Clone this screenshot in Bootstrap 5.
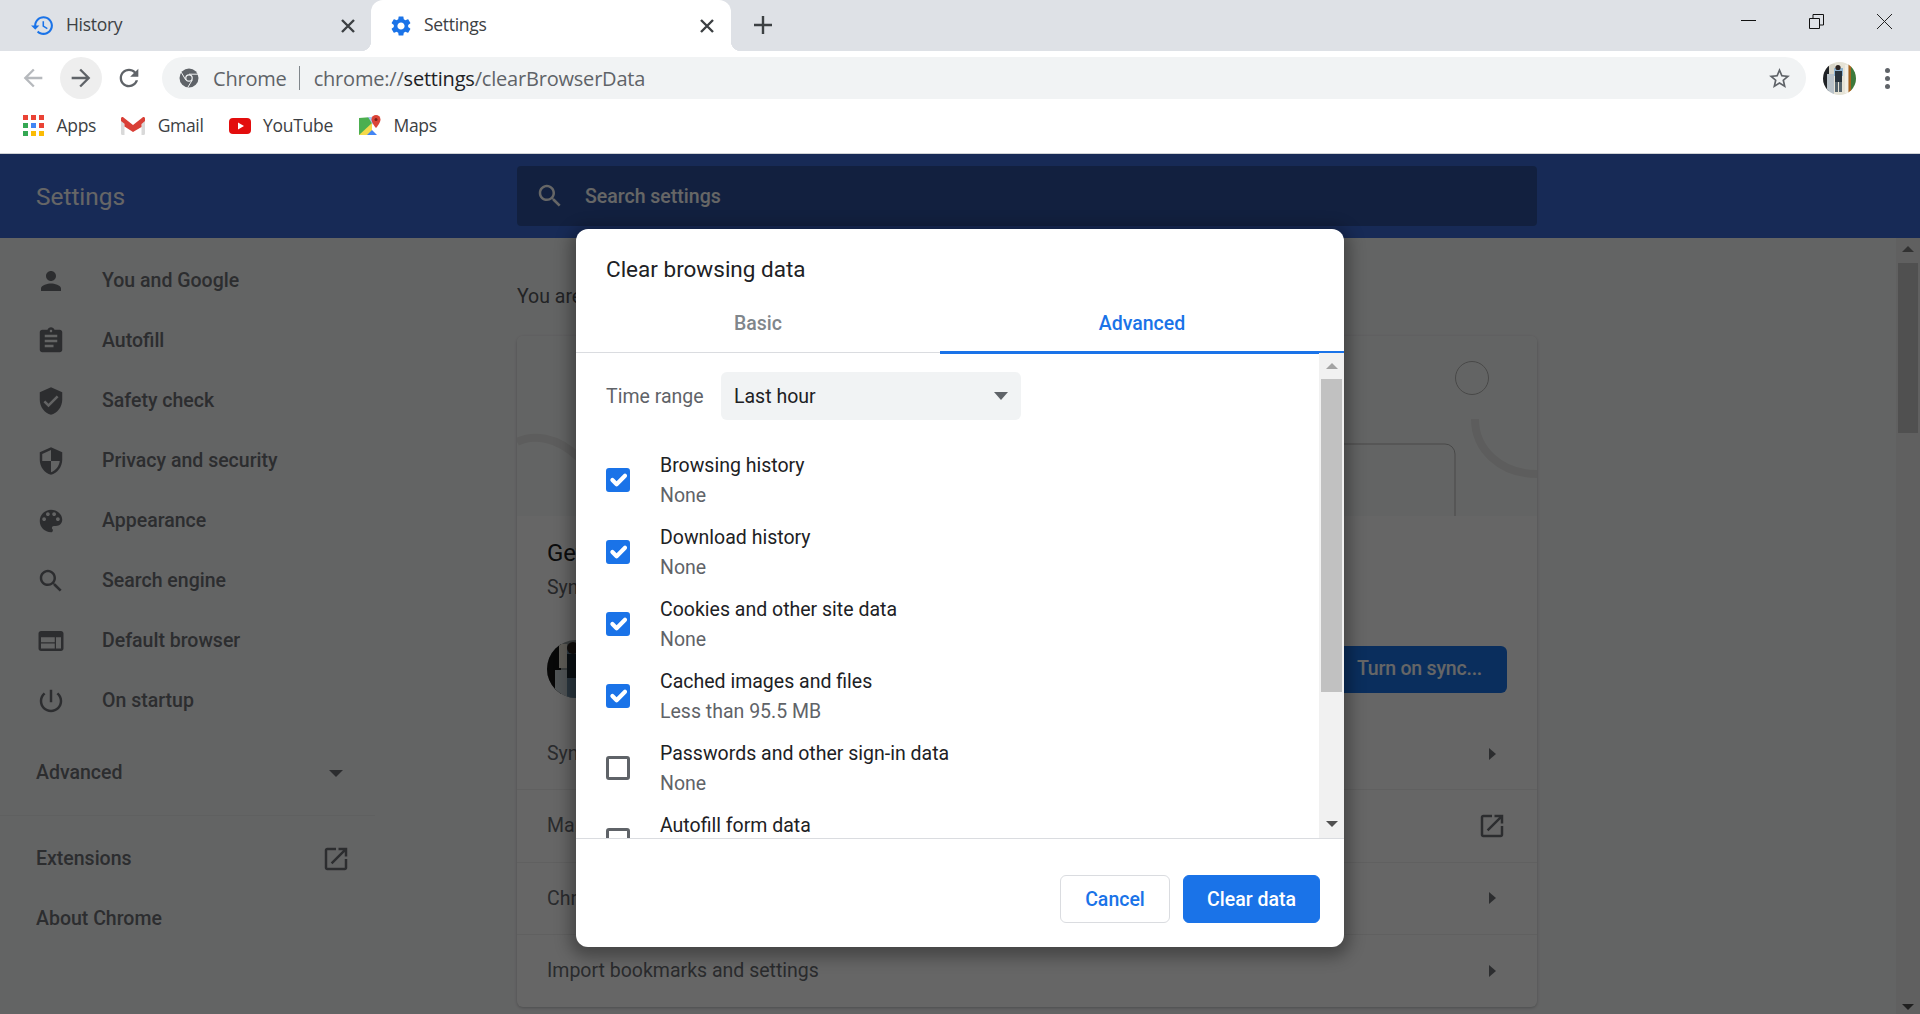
<!DOCTYPE html>
<html lang="en">
<head>
<meta charset="UTF-8">
<title>Settings</title>
<link href="https://cdn.jsdelivr.net/npm/bootstrap@5.3.0/dist/css/bootstrap.min.css" rel="stylesheet">
<style>
html, body { height: 100%; overflow: hidden; }
body { font-family: Roboto, sans-serif; background: #fff; color: #202124; }
svg { display: block; flex: none; fill: currentColor; }

/* browser chrome */
.chrome-ui { font-family: "Open Sans", "Noto Sans", sans-serif; }
.tab-strip { height: 51px; background: #dee1e6; color: #3c4043; }
.tab-item { width: 360px; height: 51px; font-size: 17.5px; padding: 0 17px 0 32px; letter-spacing: -.3px; }
.tab-item span { margin-top: -2px; }
.tab-first { width: 371px; padding-left: 30px; padding-right: 16px; }
.tab-active { background: #fff; border-radius: 12px 12px 0 0; position: relative; padding-left: 18px; padding-right: 17px; }
.tab-active::before, .tab-active::after { content: ""; position: absolute; bottom: 0; width: 10px; height: 10px; }
.tab-active::before { left: -10px; background: radial-gradient(circle at 0 0, transparent 10px, #fff 10.5px); }
.tab-active::after { right: -10px; background: radial-gradient(circle at 100% 0, transparent 10px, #fff 10.5px); }
.tab-title { margin-left: 11px; }
.new-tab { margin-left: 23px; margin-top: -1px; }
.win-btns { margin-left: auto; margin-right: 28px; gap: 53px; margin-top: -8px; color: #111; }
.tool-row { height: 54px; padding: 6px 0; color: #5f6368; }
.tool-back { margin-left: 19px; color: #b6b9bd; }
.tool-fwd { width: 42px; height: 42px; border-radius: 50%; background: #eeeeee; margin-left: 13px; }
.tool-reload { margin-left: 13px; }
.addr-bar { width: 1644px; height: 42px; margin-left: 19px; background: #f1f3f4; border-radius: 21px; padding: 0 14px 0 17px; font-size: 20px; letter-spacing: -.2px; }
.addr-text { padding-top: 1px; }
.addr-sep { width: 1px; height: 24px; background: #80868b; margin: 0 14px 0 12px; }
.addr-host { color: #202124; }
.addr-gray { color: #5f6368; }
.addr-origin { margin-left: 14px; padding-top: 1px; color: #5f6368; }
.avatar-pic { margin-left: 17px; }
.menu-dots { margin-left: 29px; gap: 3px; }
.menu-dots i { display: block; width: 5px; height: 5px; border-radius: 50%; background: #5f6368; }
.mark-row { height: 49px; padding: 0 0 7px 23px; border-bottom: 1px solid #d0d2d5; font-size: 17.5px; color: #3c4043; letter-spacing: -.3px; }
.mark-item { margin-right: 25px; gap: 12.5px; }
.apps-grid { display: grid; grid-template-columns: repeat(3, 5px); gap: 3px; width: 21px; }
.apps-grid i { display: block; width: 5px; height: 5px; }

/* settings page, dimmed by the scrim */
.settings-page { position: relative; height: 860px; background: #f8f9fa; overflow: hidden; }
.page-head { height: 84px; background: #3b6ad8; color: #fff; padding-left: 36px; }
.head-title { font-size: 24.4px; width: 481px; padding-top: 3px; }
.head-search { width: 1020px; height: 60px; background: #2d529d; border-radius: 4px; padding-left: 18px; font-size: 19.5px; font-weight: 500; color: #fff; gap: 20px; }
.head-search span { padding-top: 2px; }
.page-body { height: 776px; }
.side-menu { width: 375px; padding-top: 13px; }
.side-link { height: 60px; padding: 0 0 0 36px; color: #6f7277; font-size: 19.5px; font-weight: 500; }
.side-link:hover { color: #6f7277; }
.side-ico { width: 66px; color: #6f7277; }
.side-adv { margin-top: 12px; }
.side-rule { border-top: 1px solid #eef0f1; margin: 12px 0 13px; opacity: 1; }
.side-end { margin-left: auto; margin-right: 24px; }
.caret-down { width: 0; height: 0; border-left: 7px solid transparent; border-right: 7px solid transparent; border-top: 7px solid #6f7277; margin-right: 32px; }
.main-col { width: 1020px; margin-left: 142px; }
.main-note { height: 98px; padding-top: 47px; font-size: 19.5px; color: #55585c; line-height: 24px; }
.sync-card { height: 671px; border: 0; border-radius: 6px; box-shadow: 0 1px 3px rgba(60,64,67,.3); background: #fff; }
.card-art { height: 180px; background: #f8fbf9; border-radius: 6px 6px 0 0; }
.art-draw { width: 100%; height: 180px; fill: none; }
.promo-block { height: 202px; padding: 22px 30px 0; }
.promo-title { font-size: 24px; line-height: 30px; color: #202124; }
.promo-sub { font-size: 19.5px; color: #5f6368; line-height: 24px; margin-top: 8px; }
.promo-row { margin-top: 40px; }
.promo-avatar { width: 58px; height: 58px; border-radius: 50%; overflow: hidden; }
.sync-btn { width: 175px; height: 47px; margin-left: auto; background: #1a73e8; border: 0; border-radius: 6px; color: #fff; font-size: 19.5px; font-weight: 500; padding: 0; letter-spacing: -.2px; }
.card-row { height: 72.25px; padding: 0 30px; font-size: 19.5px; color: #6a6d72; border-color: #f1f1f1; background: transparent; }
.row-arrow { width: 0; height: 0; border-top: 6px solid transparent; border-bottom: 6px solid transparent; border-left: 7px solid #6f7277; margin-right: 11px; }
.row-ext { color: #6f7277; }
.page-bar { width: 24px; margin-left: auto; background: #f1f1f1; position: relative; }
.page-thumb { position: absolute; left: 2px; right: 2px; top: 25px; height: 170px; background: #c8c8c8; }
.bar-up, .bar-down { position: absolute; left: 50%; margin-left: -6px; width: 0; height: 0; border-left: 6px solid transparent; border-right: 6px solid transparent; }
.bar-up { top: 8px; border-bottom: 6px solid #7d7d7d; }
.bar-down { bottom: 4px; border-top: 6px solid #505050; }
.scrim { position: absolute; inset: 0; background: rgba(0,0,0,.6); }

/* dialog */
.clear-dialog { position: absolute; left: 576px; top: 75px; width: 768px; height: 718px; border: 0; border-radius: 12px; background: #fff; box-shadow: 0 4px 16px 6px rgba(0,0,0,.32); overflow: hidden; color: #202124; }
.dlg-title { height: 72px; padding: 10px 30px 0; font-size: 22.5px; border: 0; border-radius: 0; }
.dlg-tabs { height: 52px; border-bottom: 1px solid #dadce0; }
.dlg-tabs .nav-link { display: flex; align-items: center; justify-content: center; height: 52px; border: 0; padding: 0 0 6px; font-size: 19.5px; font-weight: 500; color: #80868b; background: none; }
.dlg-tabs .nav-item:first-child { flex: 0 0 364px; }
.dlg-tabs .nav-item:last-child { flex: 0 0 404px; }
.dlg-tabs .nav-link.active { color: #1a73e8; background: none; border-bottom: 3px solid #1a73e8; padding-bottom: 5px; margin-bottom: -1px; height: 53px; }
.dlg-body { height: 485px; }
.dlg-list { flex: 1 1 auto; padding: 19px 0 0 30px; overflow: hidden; }
.range-label { width: 115px; font-size: 19.5px; color: #5f6368; padding-top: 2px; }
.range-select { width: 300px; height: 48px; border: 0; border-radius: 6px; padding: 2px 13px 0; font-size: 19.5px; color: #202124; background-color: #f1f3f4; background-size: 16px 10px; background-position: right 12px center; background-image: url("data:image/svg+xml,%3Csvg xmlns='http://www.w3.org/2000/svg' viewBox='0 0 16 10'%3E%3Cpath fill='%235f6368' d='M1 1h14L8 9z'/%3E%3C/svg%3E"); }
.data-rows { margin-top: 24px; }
.data-row { height: 72px; }
.form-check-input.data-check { width: 24px; height: 24px; margin: 0 30px 0 0; border: 3px solid #5f6368; border-radius: 3px; background-color: #fff; flex: none; }
.form-check-input.data-check:checked { background-color: #1a73e8; border-color: #1a73e8; background-origin: border-box; background-size: 28px; background-position: center; }
.data-text { padding-top: 1px; }
.data-name { font-size: 19.5px; line-height: 30px; color: #202124; }
.data-sub { font-size: 19.5px; line-height: 30px; color: #5f6368; }
.dlg-bar { width: 25px; background: #f1f1f1; position: relative; flex: none; }
.dlg-thumb { position: absolute; left: 2px; right: 2px; top: 26px; height: 313px; background: #c1c1c1; }
.dlg-bar .bar-up { top: 10px; border-bottom-color: #a3a3a3; }
.dlg-bar .bar-down { bottom: 11px; border-top-color: #505050; }
.dlg-foot { height: 109px; padding: 36px 24px 0 0; border-top: 1px solid #dadce0; gap: 13px; align-items: flex-start; border-radius: 0; }
.dlg-btn { height: 48px; font-size: 19.5px; font-weight: 500; border-radius: 6px; margin: 0; padding: 2px 0 0; }
.dlg-cancel { width: 110px; color: #1a73e8; border: 1px solid #dadce0; background: #fff; }
.dlg-ok { width: 137px; background: #1a73e8; border: 1px solid #1a73e8; color: #fff; }
</style>
</head>
<body>

<div class="chrome-ui">
  <div class="tab-strip d-flex align-items-center">
    <div class="tab-item tab-first d-flex align-items-center">
      <svg width="25" height="25" viewBox="0 0 24 24" style="color:#1a73e8"><path d="M13 3c-4.97 0-9 4.03-9 9H1l3.89 3.89.07.14L9 12H6c0-3.87 3.13-7 7-7s7 3.13 7 7-3.13 7-7 7c-1.93 0-3.68-.79-4.94-2.06l-1.42 1.42C8.27 19.99 10.51 21 13 21c4.97 0 9-4.03 9-9s-4.03-9-9-9zm-1 5v5l4.28 2.54.72-1.21-3.5-2.08V8H12z"/></svg>
      <span class="tab-title">History</span>
      <svg class="ms-auto" width="14" height="14" viewBox="0 0 14 14"><path d="M1 1l12 12M13 1L1 13" stroke="#3c4043" stroke-width="2.4" fill="none"/></svg>
    </div>
    <div class="tab-item tab-active d-flex align-items-center">
      <svg width="24" height="24" viewBox="0 0 24 24" style="color:#1a73e8"><path d="M19.14 12.94c.04-.3.06-.61.06-.94 0-.32-.02-.64-.07-.94l2.03-1.58c.18-.14.23-.41.12-.61l-1.92-3.32c-.12-.22-.37-.29-.59-.22l-2.39.96c-.5-.38-1.03-.7-1.62-.94l-.36-2.54c-.04-.24-.24-.41-.48-.41h-3.84c-.24 0-.43.17-.47.41l-.36 2.54c-.59.24-1.13.57-1.62.94l-2.39-.96c-.22-.08-.47 0-.59.22L2.74 8.87c-.12.21-.08.47.12.61l2.03 1.58c-.05.3-.09.63-.09.94s.02.64.07.94l-2.03 1.58c-.18.14-.23.41-.12.61l1.92 3.32c.12.22.37.29.59.22l2.39-.96c.5.38 1.03.7 1.62.94l.36 2.54c.05.24.24.41.48.41h3.84c.24 0 .44-.17.47-.41l.36-2.54c.59-.24 1.13-.56 1.62-.94l2.39.96c.22.08.47 0 .59-.22l1.92-3.32c.12-.22.07-.47-.12-.61l-2.01-1.58zM12 15.6c-1.98 0-3.6-1.62-3.6-3.6s1.62-3.6 3.6-3.6 3.6 1.62 3.6 3.6-1.62 3.6-3.6 3.6z"/></svg>
      <span class="tab-title">Settings</span>
      <svg class="ms-auto" width="14" height="14" viewBox="0 0 14 14"><path d="M1 1l12 12M13 1L1 13" stroke="#3c4043" stroke-width="2.4" fill="none"/></svg>
    </div>
    <svg class="new-tab" width="18" height="18" viewBox="0 0 18 18"><path d="M9 0v18M0 9h18" stroke="#3c4043" stroke-width="2.4" fill="none"/></svg>
    <div class="win-btns d-flex align-items-center">
      <svg width="15" height="15" viewBox="0 0 15 15"><path d="M0 6.5h15" stroke="#111" stroke-width="1" fill="none"/></svg>
      <svg width="15" height="15" viewBox="0 0 15 15"><path d="M.5 4.5h10v10H.5zM4 4.5V.5h10.5V11h-4" stroke="#111" stroke-width="1" fill="none"/></svg>
      <svg width="15" height="15" viewBox="0 0 15 15"><path d="M0 0l15 15M15 0L0 15" stroke="#222" stroke-width="1" fill="none"/></svg>
    </div>
  </div>

  <div class="tool-row d-flex align-items-center">
    <svg class="tool-back" width="28" height="28" viewBox="0 0 24 24"><path d="M20 11H7.83l5.59-5.59L12 4l-8 8 8 8 1.41-1.41L7.83 13H20v-2z"/></svg>
    <div class="tool-fwd d-flex align-items-center justify-content-center">
      <svg width="28" height="28" viewBox="0 0 24 24"><path transform="matrix(-1 0 0 1 24 0)" d="M20 11H7.83l5.59-5.59L12 4l-8 8 8 8 1.41-1.41L7.83 13H20v-2z"/></svg>
    </div>
    <svg class="tool-reload" width="28" height="28" viewBox="0 0 24 24"><path d="M17.65 6.35C16.2 4.9 14.21 4 12 4c-4.42 0-7.99 3.58-7.99 8s3.57 8 7.99 8c3.73 0 6.84-2.55 7.73-6h-2.08c-.82 2.33-3.04 4-5.65 4-3.31 0-6-2.69-6-6s2.69-6 6-6c1.66 0 3.14.69 4.22 1.78L13 11h7V4l-2.35 2.35z"/></svg>
    <div class="addr-bar d-flex align-items-center">
      <svg width="20" height="20" viewBox="0 0 20 20"><circle cx="10" cy="10" r="9.5" fill="#5f6368"/><circle cx="10" cy="10" r="3.8" fill="#f1f3f4"/><circle cx="10" cy="10" r="2.6" fill="#5f6368"/><path d="M10 6.2h9M6.7 11.9L2.2 4.2M13.3 11.9L8.8 19.4" stroke="#f1f3f4" stroke-width="1" fill="none"/></svg>
      <span class="addr-origin">Chrome</span>
      <span class="addr-sep"></span>
      <span class="addr-text"><span class="addr-gray">chrome://</span><span class="addr-host">settings</span><span class="addr-gray">/clearBrowserData</span></span>
      <svg class="ms-auto" width="25" height="25" viewBox="0 0 24 24"><path d="M22 9.24l-7.19-.62L12 2 9.19 8.63 2 9.24l5.46 4.73L5.82 21 12 17.27 18.18 21l-1.63-7.03L22 9.24zM12 15.4l-3.76 2.27 1-4.28-3.32-2.88 4.38-.38L12 6.1l1.71 4.04 4.38.38-3.32 2.88 1 4.28L12 15.4z"/></svg>
    </div>
    <svg class="avatar-pic" width="33" height="33" viewBox="0 0 33 33">
      <defs><clipPath id="avClip"><circle cx="16.5" cy="16.5" r="16.5"/></clipPath></defs>
      <g clip-path="url(#avClip)">
        <rect width="33" height="33" fill="#e6e3d6"/>
        <rect width="6" height="33" fill="#1f2226"/>
        <rect x="4" y="12" width="7" height="21" fill="#b9c2c9"/>
        <rect x="6" y="2" width="6" height="10" fill="#d8d5c8"/>
        <rect x="22" y="3" width="3" height="28" fill="#f2efe6"/>
        <rect x="25.500" width="2.500" height="33" fill="#a8641f"/>
        <rect x="28" width="5" height="33" fill="#3d7a3c"/>
        <rect x="11" y="6" width="9" height="8" fill="#8fb3cf"/>
        <circle cx="15" cy="5.500" r="2.600" fill="#2c2320"/>
        <rect x="12" y="9" width="7" height="11" fill="#27323b"/>
        <rect x="12" y="20" width="3" height="10" fill="#54636b"/>
        <rect x="16" y="20" width="3" height="10" fill="#54636b"/>
      </g>
    </svg>
    <div class="menu-dots d-flex flex-column"><i></i><i></i><i></i></div>
  </div>

  <div class="mark-row d-flex align-items-center">
    <div class="mark-item d-flex align-items-center">
      <div class="apps-grid">
        <i style="background:#ea4335"></i><i style="background:#ea4335"></i><i style="background:#ea4335"></i>
        <i style="background:#34a853"></i><i style="background:#4285f4"></i><i style="background:#ea4335"></i>
        <i style="background:#34a853"></i><i style="background:#fbbc05"></i><i style="background:#fbbc05"></i>
      </div>
      <span>Apps</span>
    </div>
    <div class="mark-item d-flex align-items-center">
      <svg width="24" height="18" viewBox="0 0 24 18"><path d="M0 2h3.5v16H1.5A1.5 1.5 0 0 1 0 16.5zM20.5 2H24v14.5a1.5 1.5 0 0 1-1.5 1.5h-2z" fill="#d9d9d9"/><path d="M0 1.5C0 .2 1.5-.4 2.5.4L12 8 21.5.4c1-.8 2.5-.2 2.5 1.1V4l-3.5 3v3L12 15 3.5 9.5V6.8L0 4z" fill="#d93f36"/></svg>
      <span>Gmail</span>
    </div>
    <div class="mark-item d-flex align-items-center">
      <svg width="22" height="16" viewBox="0 0 22 16"><rect width="22" height="16" rx="4" fill="#e30d0d"/><path d="M9 4.5v7l6-3.500z" fill="#fff"/></svg>
      <span>YouTube</span>
    </div>
    <div class="mark-item d-flex align-items-center">
      <svg width="23" height="22" viewBox="0 0 23 22">
        <path d="M1 3l13-1v18H1z" fill="#4caf50"/><path d="M1 20L14 8v12z" fill="#f4d94a"/><path d="M9 20l5-5 5 5z" fill="#4285f4"/><path d="M10 2h5v8z" fill="#a9c7f5"/>
        <path d="M18 0a4.500 4.500 0 0 1 4.500 4.500C22.500 8 18 13 18 13s-4.500-5-4.500-8.500A4.500 4.500 0 0 1 18 0z" fill="#db4437"/><circle cx="18" cy="4.500" r="1.500" fill="#7a1f18"/>
      </svg>
      <span>Maps</span>
    </div>
  </div>
</div>

<div class="settings-page">
  <div class="page-head d-flex align-items-center">
    <div class="head-title">Settings</div>
    <div class="head-search d-flex align-items-center">
      <svg width="30" height="30" viewBox="0 0 24 24"><path d="M15.5 14h-.79l-.28-.27C15.41 12.59 16 11.11 16 9.5 16 5.91 13.09 3 9.5 3S3 5.91 3 9.5 5.91 16 9.5 16c1.61 0 3.09-.59 4.23-1.57l.27.28v.79l5 4.99L20.49 19l-4.99-5zm-6 0C7.01 14 5 11.99 5 9.5S7.01 5 9.5 5 14 7.01 14 9.500 11.99 14 9.500 14z"/></svg>
      <span>Search settings</span>
    </div>
  </div>

  <div class="page-body d-flex">
    <nav class="side-menu nav flex-column flex-nowrap">
      <a class="side-link nav-link d-flex align-items-center" href="#"><span class="side-ico"><svg width="30" height="30" viewBox="0 0 24 24"><path d="M12 12c2.210 0 4-1.790 4-4s-1.790-4-4-4-4 1.790-4 4 1.790 4 4 4zm0 2c-2.670 0-8 1.340-8 4v2h16v-2c0-2.660-5.330-4-8-4z"/></svg></span>You and Google</a>
      <a class="side-link nav-link d-flex align-items-center" href="#"><span class="side-ico"><svg width="30" height="30" viewBox="0 0 24 24"><path d="M19 3h-4.180C14.400 1.840 13.300 1 12 1c-1.300 0-2.400.840-2.820 2H5c-1.100 0-2 .900-2 2v14c0 1.100.900 2 2 2h14c1.100 0 2-.900 2-2V5c0-1.100-.900-2-2-2zm-7 0c.550 0 1 .450 1 1s-.450 1-1 1-1-.450-1-1 .450-1 1-1zm2 14H7v-2h7v2zm3-4H7v-2h10v2zm0-4H7V7h10v2z"/></svg></span>Autofill</a>
      <a class="side-link nav-link d-flex align-items-center" href="#"><span class="side-ico"><svg width="30" height="30" viewBox="0 0 24 24"><path d="M12 1L3 5v6c0 5.550 3.840 10.740 9 12 5.160-1.260 9-6.450 9-12V5l-9-4zm-2 16l-4-4 1.410-1.410L10 14.170l6.590-6.590L18 9l-8 8z"/></svg></span>Safety check</a>
      <a class="side-link nav-link d-flex align-items-center" href="#"><span class="side-ico"><svg width="30" height="30" viewBox="0 0 24 24"><path d="M12 1L3 5v6c0 5.550 3.840 10.740 9 12 5.160-1.260 9-6.450 9-12V5l-9-4zm0 10.990h7c-.530 4.120-3.280 7.790-7 8.940V12H5V6.300l7-3.110v8.800z"/></svg></span>Privacy and security</a>
      <a class="side-link nav-link d-flex align-items-center" href="#"><span class="side-ico"><svg width="30" height="30" viewBox="0 0 24 24"><path d="M12 3c-4.970 0-9 4.030-9 9s4.030 9 9 9c.830 0 1.500-.670 1.500-1.500 0-.390-.150-.740-.390-1.010-.230-.260-.380-.610-.380-.990 0-.830.670-1.500 1.500-1.500H16c2.760 0 5-2.240 5-5 0-4.420-4.030-8-9-8zm-5.500 9c-.830 0-1.500-.670-1.500-1.500S5.670 9 6.500 9 8 9.670 8 10.500 7.330 12 6.500 12zm3-4C8.670 8 8 7.330 8 6.500S8.670 5 9.500 5s1.500.670 1.500 1.500S10.330 8 9.500 8zm5 0c-.830 0-1.500-.670-1.500-1.500S13.670 5 14.500 5s1.500.670 1.500 1.500S15.330 8 14.500 8zm3 4c-.830 0-1.500-.670-1.500-1.500S16.670 9 17.500 9s1.500.670 1.500 1.500-.670 1.500-1.500 1.500z"/></svg></span>Appearance</a>
      <a class="side-link nav-link d-flex align-items-center" href="#"><span class="side-ico"><svg width="30" height="30" viewBox="0 0 24 24"><path d="M15.500 14h-.790l-.280-.270C15.410 12.590 16 11.110 16 9.500 16 5.910 13.090 3 9.500 3S3 5.910 3 9.500 5.910 16 9.500 16c1.610 0 3.090-.590 4.230-1.570l.270.280v.790l5 4.990L20.490 19l-4.990-5zm-6 0C7.010 14 5 11.990 5 9.500S7.010 5 9.500 5 14 7.010 14 9.500 11.990 14 9.500 14z"/></svg></span>Search engine</a>
      <a class="side-link nav-link d-flex align-items-center" href="#"><span class="side-ico"><svg width="30" height="30" viewBox="0 0 24 24"><path d="M20 4H4c-1.100 0-1.990.900-1.990 2L2 18c0 1.100.900 2 2 2h16c1.100 0 2-.900 2-2V6c0-1.100-.900-2-2-2zm-5 14H4v-4h11v4zm0-5H4V9h11v4zm5 5h-4V9h4v9z"/></svg></span>Default browser</a>
      <a class="side-link nav-link d-flex align-items-center" href="#"><span class="side-ico"><svg width="30" height="30" viewBox="0 0 24 24"><path d="M13 3h-2v10h2V3zm4.830 2.170l-1.420 1.420C17.990 7.860 19 9.810 19 12c0 3.870-3.130 7-7 7s-7-3.130-7-7c0-2.190 1.010-4.140 2.580-5.420L6.170 5.170C4.230 6.820 3 9.260 3 12c0 4.970 4.030 9 9 9s9-4.030 9-9c0-2.740-1.230-5.180-3.170-6.830z"/></svg></span>On startup</a>
      <a class="side-link side-adv nav-link d-flex align-items-center" href="#">Advanced<span class="caret-down ms-auto"></span></a>
      <hr class="side-rule">
      <a class="side-link nav-link d-flex align-items-center" href="#">Extensions<svg class="side-end" width="30" height="30" viewBox="0 0 24 24"><path d="M19 19H5V5h7V3H5c-1.110 0-2 .900-2 2v14c0 1.100.890 2 2 2h14c1.100 0 2-.900 2-2v-7h-2v7zM14 3v2h3.590l-9.830 9.830 1.410 1.410L19 6.410V10h2V3h-7z"/></svg></a>
      <a class="side-link nav-link d-flex align-items-center" href="#">About Chrome</a>
    </nav>

    <div class="main-col">
      <div class="main-note">You are not signed in to Chrome</div>
      <div class="sync-card card">
        <div class="card-art">
          <svg class="art-draw" viewBox="0 0 1020 180">
            <circle cx="955" cy="42" r="16.500" stroke="#b4b4b4" stroke-width="1"/>
            <path d="M958 83c0 30 25 55 62 55" stroke="#e8e8e8" stroke-width="8"/>
            <path d="M300 108h628a10 10 0 0 1 10 10v62" stroke="#b4b4b4" stroke-width="1"/>
            <path d="M0 106c15-8 40-6 62 16" stroke="#e8e8e8" stroke-width="8"/>
          </svg>
        </div>
        <div class="promo-block">
          <div class="promo-title">Get Google smarts in Chrome</div>
          <div class="promo-sub">Sync and personalize Chrome across your devices</div>
          <div class="promo-row d-flex align-items-center">
            <svg class="promo-avatar" viewBox="0 0 58 58">
              <rect width="58" height="58" fill="#9aa0a0"/><rect width="14" height="58" fill="#141414"/><rect x="8" y="30" width="14" height="28" fill="#c9d2d8"/><rect x="12" y="4" width="8" height="24" fill="#e9e4d8"/><rect x="20" y="6" width="10" height="52" fill="#6d8ba0"/><circle cx="26" cy="8" r="6" fill="#2c2320"/><rect x="20" y="14" width="14" height="24" fill="#1d2a33"/>
            </svg>
            <button class="sync-btn btn">Turn on sync...</button>
          </div>
        </div>
        <div class="list-group list-group-flush">
          <div class="card-row list-group-item d-flex align-items-center justify-content-between">Sync and Google services<span class="row-arrow"></span></div>
          <div class="card-row list-group-item d-flex align-items-center justify-content-between">Manage your Google Account<svg class="row-ext" width="30" height="30" viewBox="0 0 24 24"><path d="M19 19H5V5h7V3H5c-1.110 0-2 .900-2 2v14c0 1.100.890 2 2 2h14c1.100 0 2-.900 2-2v-7h-2v7zM14 3v2h3.590l-9.830 9.830 1.410 1.410L19 6.410V10h2V3h-7z"/></svg></div>
          <div class="card-row list-group-item d-flex align-items-center justify-content-between">Chrome name and picture<span class="row-arrow"></span></div>
          <div class="card-row list-group-item d-flex align-items-center justify-content-between">Import bookmarks and settings<span class="row-arrow"></span></div>
        </div>
      </div>
    </div>

    <div class="page-bar"><span class="bar-up"></span><div class="page-thumb"></div><span class="bar-down"></span></div>
  </div>

  <div class="scrim"></div>

  <div class="clear-dialog modal-content d-flex flex-column">
    <div class="dlg-title modal-header">Clear browsing data</div>
    <ul class="dlg-tabs nav nav-tabs flex-nowrap">
      <li class="nav-item"><a class="nav-link" href="#">Basic</a></li>
      <li class="nav-item"><a class="nav-link active" href="#">Advanced</a></li>
    </ul>
    <div class="dlg-body modal-body d-flex p-0">
      <div class="dlg-list">
        <div class="d-flex align-items-center">
          <label class="range-label" for="rangeSel">Time range</label>
          <select id="rangeSel" class="range-select form-select"><option>Last hour</option></select>
        </div>
        <div class="data-rows" id="dataRows"></div>
      </div>
      <div class="dlg-bar"><span class="bar-up"></span><div class="dlg-thumb"></div><span class="bar-down"></span></div>
    </div>
    <div class="dlg-foot modal-footer">
      <button class="dlg-btn dlg-cancel btn">Cancel</button>
      <button class="dlg-btn dlg-ok btn">Clear data</button>
    </div>
  </div>
</div>

<script src="https://cdn.jsdelivr.net/npm/bootstrap@5.3.0/dist/js/bootstrap.bundle.min.js"></script>
<script>
    const dataRows = [
        { name: 'Browsing history', sub: 'None', on: true },
        { name: 'Download history', sub: 'None', on: true },
        { name: 'Cookies and other site data', sub: 'None', on: true },
        { name: 'Cached images and files', sub: 'Less than 95.5 MB', on: true },
        { name: 'Passwords and other sign-in data', sub: 'None', on: false },
        { name: 'Autofill form data', sub: 'None', on: false }
    ];

    document.getElementById('dataRows').innerHTML = dataRows.map(r => `
        <div class="data-row d-flex align-items-center">
            <input class="data-check form-check-input" type="checkbox" ${r.on ? 'checked' : ''}>
            <div class="data-text">
                <div class="data-name">${r.name}</div>
                <div class="data-sub">${r.sub}</div>
            </div>
        </div>`).join('');
</script>
</body>
</html>
